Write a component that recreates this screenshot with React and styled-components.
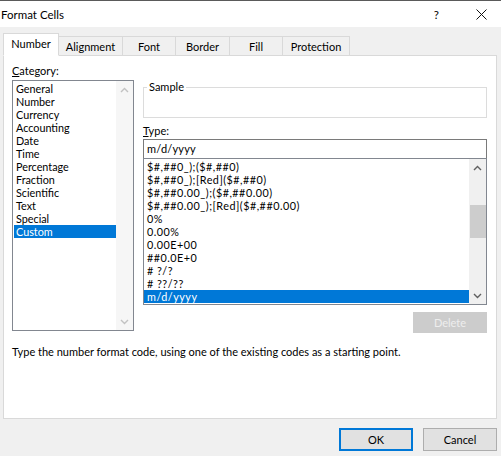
import React from "react";
import styled, { createGlobalStyle } from "styled-components";

const categories = [
  "General",
  "Number",
  "Currency",
  "Accounting",
  "Date",
  "Time",
  "Percentage",
  "Fraction",
  "Scientific",
  "Text",
  "Special",
  "Custom",
];

const formats = [
  "$#,##0_);($#,##0)",
  "$#,##0_);[Red]($#,##0)",
  "$#,##0.00_);($#,##0.00)",
  "$#,##0.00_);[Red]($#,##0.00)",
  "0%",
  "0.00%",
  "0.00E+00",
  "##0.0E+0",
  "# ?/?",
  "# ??/??",
  "m/d/yyyy",
];

const tabs = [
  { label: "Number", width: 56 },
  { label: "Alignment", width: 64 },
  { label: "Font", width: 53 },
  { label: "Border", width: 54 },
  { label: "Fill", width: 53 },
  { label: "Protection", width: 67 },
];

const Chevron = ({ up, color }) => (
  <svg width="9" height="6" viewBox="0 0 9 6">
    <polyline
      points={up ? "1,5 4.5,1.5 8,5" : "1,1 4.5,4.5 8,1"}
      fill="none"
      stroke={color}
      strokeWidth="1.4"
    />
  </svg>
);

const App = () => {
  return (
    <>
      <GlobalStyle />
      <Window>
        <TitleBar>
          <Title>Format Cells</Title>
          <TitleButtons>
            <HelpMark>?</HelpMark>
            <svg width="11" height="11" viewBox="0 0 11 11">
              <path d="M0.5 0.5 L10.5 10.5 M10.5 0.5 L0.5 10.5" stroke="#111" strokeWidth="1" />
            </svg>
          </TitleButtons>
        </TitleBar>

        <TabStrip>
          {tabs.map((t, i) => (
            <Tab key={t.label} $active={i === 0} $width={t.width}>
              {t.label}
            </Tab>
          ))}
        </TabStrip>

        <Panel>
          <Columns>
            <LeftCol>
              <FieldLabel>
                <u>C</u>ategory:
              </FieldLabel>
              <CategoryBox>
                <Items>
                  {categories.map((c) => (
                    <Item key={c} $selected={c === "Custom"}>
                      {c}
                    </Item>
                  ))}
                </Items>
                <ScrollBar $disabled>
                  <ScrollArrow>
                    <Chevron up color="#c2c2c2" />
                  </ScrollArrow>
                  <ScrollTrack />
                  <ScrollArrow>
                    <Chevron color="#c2c2c2" />
                  </ScrollArrow>
                </ScrollBar>
              </CategoryBox>
            </LeftCol>

            <RightCol>
              <SampleGroup>
                <Legend>Sample</Legend>
              </SampleGroup>
              <TypeLabel>
                <u>T</u>ype:
              </TypeLabel>
              <TypeInput>m/d/yyyy</TypeInput>
              <FormatBox>
                <FormatItems>
                  {formats.map((f) => (
                    <FormatItem key={f} $selected={f === "m/d/yyyy"}>
                      {f}
                    </FormatItem>
                  ))}
                </FormatItems>
                <ScrollBar>
                  <ScrollArrow>
                    <Chevron up color="#606060" />
                  </ScrollArrow>
                  <ScrollTrack>
                    <Thumb />
                  </ScrollTrack>
                  <ScrollArrow>
                    <Chevron color="#606060" />
                  </ScrollArrow>
                </ScrollBar>
              </FormatBox>
              <DeleteButton disabled>Delete</DeleteButton>
            </RightCol>
          </Columns>

          <Description>
            Type the number format code, using one of the existing codes as a
            starting point.
          </Description>
        </Panel>

        <Footer>
          <DialogButton $default>OK</DialogButton>
          <DialogButton>Cancel</DialogButton>
        </Footer>
      </Window>
    </>
  );
};

export default App;

// Styled Components
const GlobalStyle = createGlobalStyle`
  body {
    margin: 0;
    background: #f0f0f0;
    font-family: Lato, "Noto Sans", sans-serif;
    font-size: 11px;
    color: #000;
  }
`;

const Window = styled.div`
  width: 501px;
  height: 456px;
  display: flex;
  flex-direction: column;
  background: #f0f0f0;
  overflow: hidden;
`;

const TitleBar = styled.div`
  height: 26px;
  border-top: 1px solid #5a5a5a;
  background: #ffffff;
  display: flex;
  align-items: center;
  justify-content: space-between;
  padding: 0 14px 0 1px;
`;

const Title = styled.div`
  font-size: 11.5px;
`;

const TitleButtons = styled.div`
  display: flex;
  align-items: center;
  gap: 37px;
`;

const HelpMark = styled.span`
  font-size: 11.5px;
`;

const TabStrip = styled.div`
  display: flex;
  align-items: flex-end;
  padding: 6px 0 0 3px;
  height: 22px;
  position: relative;
  z-index: 1;
`;

const Tab = styled.div`
  width: ${(p) => p.$width}px;
  height: ${(p) => (p.$active ? 23 : 19)}px;
  box-sizing: border-box;
  display: flex;
  align-items: center;
  justify-content: center;
  padding-bottom: ${(p) => (p.$active ? 3 : 0)}px;
  background: ${(p) => (p.$active ? "#ffffff" : "#f0f0f0")};
  border: 1px solid #d9d9d9;
  border-bottom: ${(p) => (p.$active ? "1px solid #ffffff" : "none")};
  margin-bottom: ${(p) => (p.$active ? -1 : 0)}px;
  & + & {
    border-left: none;
  }
`;

const Panel = styled.div`
  height: 364px;
  margin: 0 4px 0 3px;
  box-sizing: border-box;
  background: #ffffff;
  border: 1px solid #d9d9d9;
  padding: 8px 8px 0 8px;
  display: flex;
  flex-direction: column;
`;

const Columns = styled.div`
  display: flex;
  gap: 9px;
`;

const LeftCol = styled.div`
  width: 122px;
  display: flex;
  flex-direction: column;
`;

const FieldLabel = styled.div`
  height: 16px;
  line-height: 14px;
`;

const CategoryBox = styled.div`
  height: 251px;
  box-sizing: border-box;
  border: 1px solid #828790;
  display: flex;
`;

const Items = styled.div`
  flex: 1;
  padding: 1px 0 0 1px;
`;

const Item = styled.div`
  height: 13px;
  line-height: 13px;
  font-size: 10.8px;
  padding-left: 2px;
  white-space: nowrap;
  background: ${(p) => (p.$selected ? "#0078d7" : "transparent")};
  color: ${(p) => (p.$selected ? "#ffffff" : "#000000")};
`;

const ScrollBar = styled.div`
  width: 17px;
  display: flex;
  flex-direction: column;
  background: ${(p) => (p.$disabled ? "#f6f6f6" : "#f0f0f0")};
`;

const ScrollArrow = styled.div`
  height: 17px;
  display: flex;
  align-items: center;
  justify-content: center;
`;

const ScrollTrack = styled.div`
  flex: 1;
  position: relative;
`;

const Thumb = styled.div`
  position: absolute;
  left: 1px;
  right: 0;
  top: 29px;
  height: 33px;
  background: #cdcdcd;
`;

const RightCol = styled.div`
  width: 344px;
  display: flex;
  flex-direction: column;
`;

const SampleGroup = styled.div`
  margin-top: 23px;
  height: 31px;
  box-sizing: border-box;
  border: 1px solid #dcdcdc;
  position: relative;
`;

const Legend = styled.span`
  position: absolute;
  top: -9px;
  left: 3px;
  padding: 0 2px;
  background: #ffffff;
  line-height: 16px;
`;

const TypeLabel = styled.div`
  margin-top: 5px;
  height: 16px;
  line-height: 15px;
`;

const TypeInput = styled.div`
  height: 20px;
  box-sizing: border-box;
  border: 1px solid #7a7a7a;
  padding-left: 3px;
  line-height: 18px;
  letter-spacing: 0.2px;
`;

const FormatBox = styled.div`
  height: 147px;
  margin-top: -1px;
  box-sizing: border-box;
  border: 1px solid #828790;
  display: flex;
`;

const FormatItems = styled.div`
  flex: 1;
  padding: 1px 0 0 0;
`;

const FormatItem = styled.div`
  height: 13px;
  line-height: 13px;
  font-size: 10.8px;
  letter-spacing: 0.5px;
  padding-left: 3px;
  white-space: nowrap;
  background: ${(p) => (p.$selected ? "#0078d7" : "transparent")};
  color: ${(p) => (p.$selected ? "#ffffff" : "#000000")};
`;

const DeleteButton = styled.button`
  align-self: flex-end;
  margin-top: 7px;
  width: 74px;
  height: 21px;
  border: 1px solid #cccccc;
  background: #cccccc;
  color: #eeeeee;
  font-family: inherit;
  font-size: 11px;
  padding: 0;
`;

const Description = styled.div`
  margin-top: 12px;
  line-height: 14px;
  white-space: nowrap;
`;

const Footer = styled.div`
  display: flex;
  justify-content: flex-end;
  gap: 10px;
  padding: 9px 4px 0 0;
`;

const DialogButton = styled.button`
  width: 74px;
  height: 23px;
  box-sizing: border-box;
  background: #e1e1e1;
  border: ${(p) => (p.$default ? "2px solid #0078d7" : "1px solid #adadad")};
  font-family: inherit;
  font-size: 11px;
  color: #000;
  padding: 0;
`;
